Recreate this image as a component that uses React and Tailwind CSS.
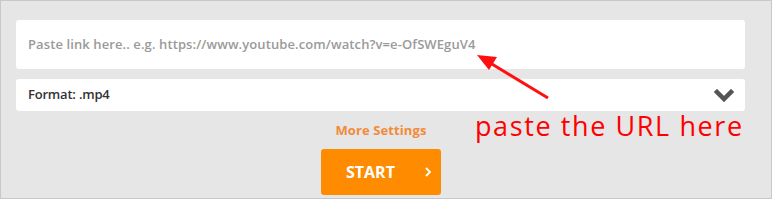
import React from 'react';

const App = () => {
  return (
    <div className="w-[774px] h-[200px] bg-white">
      <div className="relative w-[772px] h-[199px] bg-[#e6e6e6] border border-[#c8c8c8] pt-[19px] px-[15px]">
        {/* Link input */}
        <div className="w-[729px] h-[49px] bg-white rounded-[3px] flex items-center pl-[12px]">
          <span className="text-[13px] font-semibold text-[#9a9a9a] tracking-[0.1px]" style={{ fontFamily: '"Open Sans", sans-serif' }}>
            Paste link here.. e.g. https://www.youtube.com/watch?v=e-OfSWEguV4
          </span>
        </div>

        {/* Format select */}
        <div className="mt-[10px] w-[729px] h-[32px] bg-white rounded-[3px] flex items-center justify-between pl-[12px] pr-[11px]">
          <span className="text-[13px] font-semibold text-[#333] tracking-[-0.2px]" style={{ fontFamily: '"Open Sans", sans-serif' }}>
            Format: .mp4
          </span>
          <svg width="20" height="13" viewBox="0 0 20 13">
            <path d="M3 3 L10 10 L17 3" fill="none" stroke="#555" strokeWidth="4.5" strokeLinecap="square" />
          </svg>
        </div>

        <div className="flex flex-col items-center w-[730px]">
          <span className="mt-[10px] text-[13px] font-bold text-[#f28a3a] tracking-[0.1px]" style={{ fontFamily: '"Open Sans", sans-serif' }}>
            More Settings
          </span>
          <button className="mt-[8px] w-[120px] h-[46px] bg-[#ff8c00] rounded-[3px] flex items-center pl-[25px] gap-[29px] text-white">
            <span className="text-[16px] font-bold" style={{ fontFamily: '"Open Sans", sans-serif' }}>START</span>
            <svg width="8" height="12" viewBox="0 0 8 12">
              <path d="M2 2 L6 6 L2 10" fill="none" stroke="white" strokeWidth="1.8" />
            </svg>
          </button>
        </div>

        {/* annotation */}
        <span className="absolute left-[474px] top-[111px] text-[27px] tracking-[1.6px] text-[#ff0000] leading-none" style={{ fontFamily: '"Open Sans", sans-serif' }}>
          paste the URL here
        </span>
        <svg className="absolute left-0 top-0 pointer-events-none" width="772" height="199">
          <line x1="547" y1="97" x2="486" y2="60" stroke="#ff1010" strokeWidth="3" />
          <polygon points="476,54 496,56 488,69" fill="#ff1010" />
        </svg>
      </div>
    </div>
  );
};

export default App;
